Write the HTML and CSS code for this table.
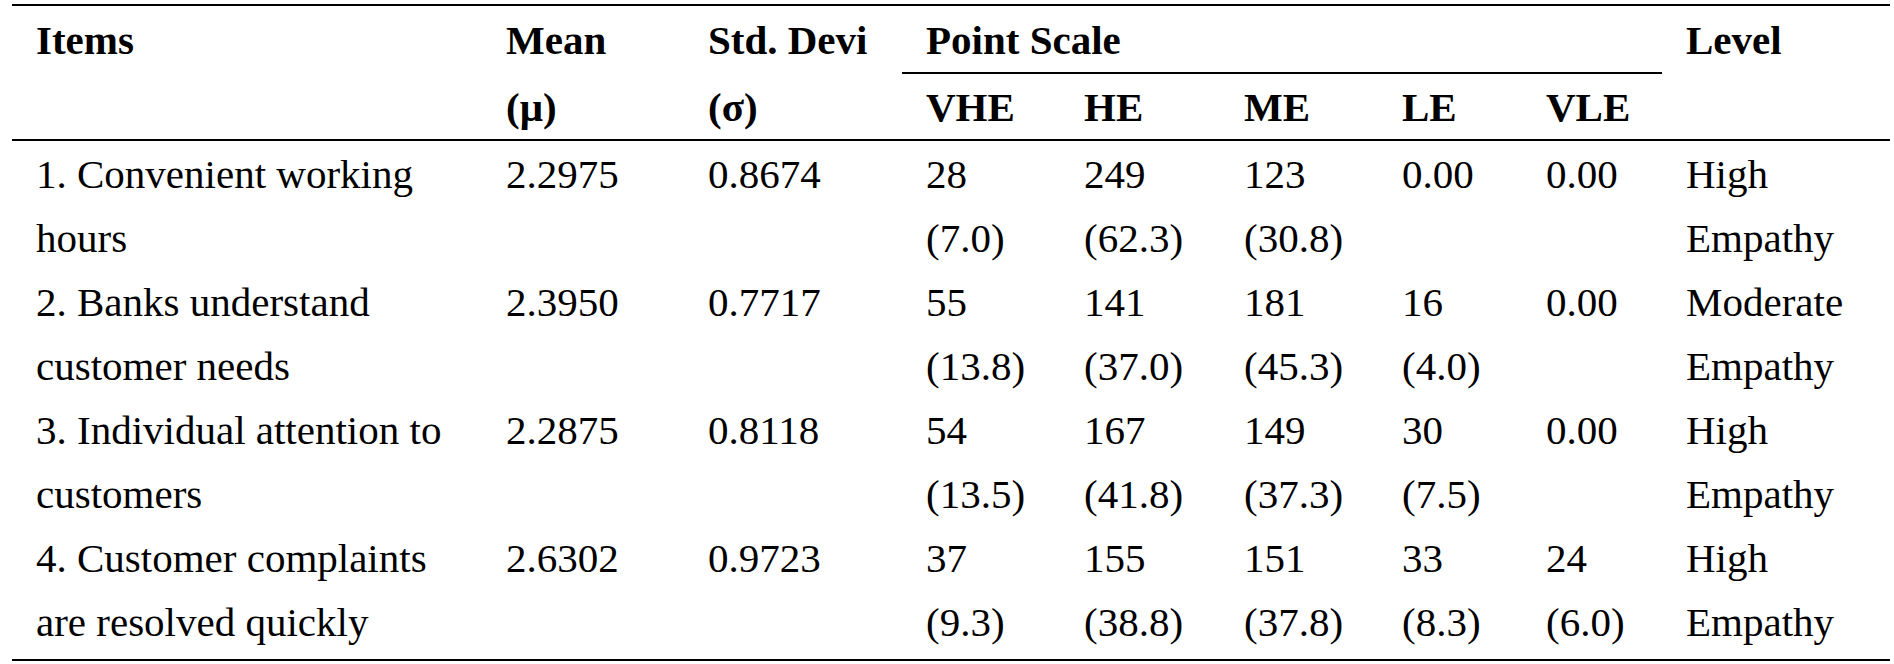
FILE: index.html
```html
<!DOCTYPE html>
<html>
<head>
<meta charset="utf-8">
<link rel="stylesheet" href="styles.css">
</head>
<body>
<div class="page">
  <div class="grid">
    <div class="hd r1 c1">Items</div>
    <div class="hd r1 c2">Mean</div>
    <div class="hd r1 c3">Std. Devi</div>
    <div class="hd r1 scale">Point Scale</div>
    <div class="hd r1 level">Level</div>

    <div class="hd r2 c1 rule"></div>
    <div class="hd r2 rule">(μ)</div>
    <div class="hd r2 rule">(σ)</div>
    <div class="hd r2 rule">VHE</div>
    <div class="hd r2 rule">HE</div>
    <div class="hd r2 rule">ME</div>
    <div class="hd r2 rule">LE</div>
    <div class="hd r2 rule">VLE</div>

    <div class="cell first">1. Convenient working<br>hours</div>
    <div class="cell first">2.2975</div>
    <div class="cell first">0.8674</div>
    <div class="cell first">28<br>(7.0)</div>
    <div class="cell first">249<br>(62.3)</div>
    <div class="cell first">123<br>(30.8)</div>
    <div class="cell first">0.00</div>
    <div class="cell first">0.00</div>
    <div class="cell first">High<br>Empathy</div>

    <div class="cell">2. Banks understand<br>customer needs</div>
    <div class="cell">2.3950</div>
    <div class="cell">0.7717</div>
    <div class="cell">55<br>(13.8)</div>
    <div class="cell">141<br>(37.0)</div>
    <div class="cell">181<br>(45.3)</div>
    <div class="cell">16<br>(4.0)</div>
    <div class="cell">0.00</div>
    <div class="cell">Moderate<br>Empathy</div>

    <div class="cell">3. Individual attention to<br>customers</div>
    <div class="cell">2.2875</div>
    <div class="cell">0.8118</div>
    <div class="cell">54<br>(13.5)</div>
    <div class="cell">167<br>(41.8)</div>
    <div class="cell">149<br>(37.3)</div>
    <div class="cell">30<br>(7.5)</div>
    <div class="cell">0.00</div>
    <div class="cell">High<br>Empathy</div>

    <div class="cell last">4. Customer complaints<br>are resolved quickly</div>
    <div class="cell last">2.6302</div>
    <div class="cell last">0.9723</div>
    <div class="cell last">37<br>(9.3)</div>
    <div class="cell last">155<br>(38.8)</div>
    <div class="cell last">151<br>(37.8)</div>
    <div class="cell last">33<br>(8.3)</div>
    <div class="cell last">24<br>(6.0)</div>
    <div class="cell last">High<br>Empathy</div>
  </div>
</div>
</body>
</html>
```

FILE: styles.css
```css
html, body {
  margin: 0;
  padding: 0;
  background: #ffffff;
}

.page {
  padding: 4px 4px 0 12px;
}

.grid {
  width: 1878px;
  display: grid;
  grid-template-columns: 470px 202px 218px 158px 160px 158px 144px 140px 228px;
  border-top: 2px solid #000;
  border-bottom: 2px solid #000;
  font-family: "Liberation Serif", "Times New Roman", serif;
  font-size: 41px;
  line-height: 64px;
  color: #000;
}

.grid > div {
  padding-left: 24px;
  white-space: nowrap;
}

.hd {
  font-weight: bold;
}

.r1 {
  grid-row: 1;
  padding-top: 2px;
}

.c1 { grid-column: 1; }
.c2 { grid-column: 2; }
.c3 { grid-column: 3; }

.scale {
  grid-column: 4 / 9;
  border-bottom: 2px solid #000;
}

.level {
  grid-column: 9;
  grid-row: 1 / 3;
  border-bottom: 2px solid #000;
}

.r2 {
  grid-row: 2;
  padding-top: 1px;
}

.rule {
  border-bottom: 2px solid #000;
}

.cell.first {
  padding-top: 1px;
}

.cell.last {
  padding-bottom: 5px;
}
```
